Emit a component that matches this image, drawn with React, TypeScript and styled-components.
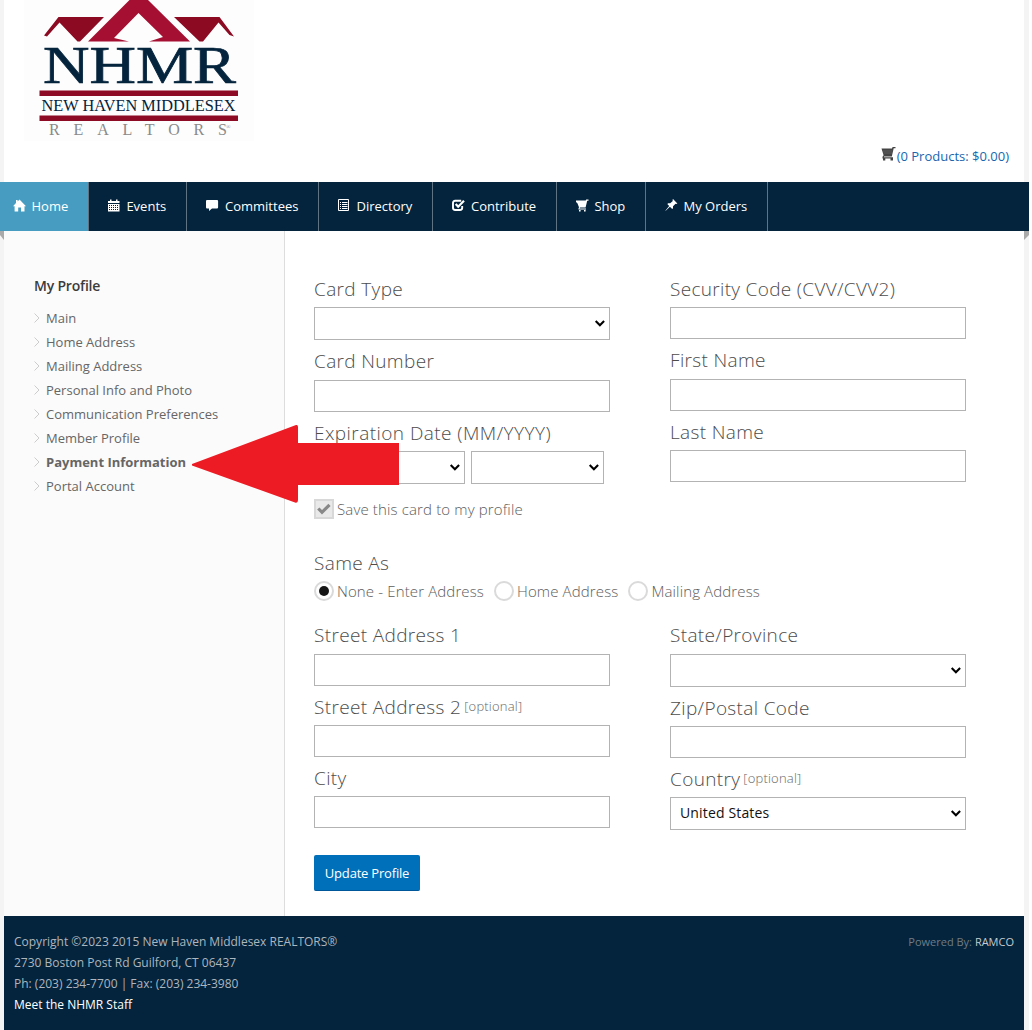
import React from "react";
import styled, { createGlobalStyle, css } from "styled-components";

const NAVY = "#04243d";

const GlobalStyle = createGlobalStyle`
  * { box-sizing: border-box; }
  body {
    margin: 0;
    background: #fff;
    font-family: "Open Sans", "Noto Sans", sans-serif;
    font-size: 13px;
    color: #666;
    overflow: hidden;
  }
  a { color: inherit; text-decoration: none; }
`;

const Backdrop = styled.div`
  position: relative;
  width: 1029px;
  height: 1030px;
  padding-left: 4px;
  background: #f4f4f4;
  overflow: hidden;
`;

const Page = styled.div`
  width: 1020px;
  height: 1030px;
  display: flex;
  flex-direction: column;
  background: #fff;
`;

const Header = styled.header`
  height: 182px;
  flex: none;
  display: flex;
  justify-content: space-between;
  align-items: flex-start;
  padding: 0 15px 0 20px;
`;

const LogoSvg = styled.svg`
  display: block;
  font-family: "Liberation Serif", serif;
`;

const Cart = styled.a`
  display: flex;
  align-items: center;
  margin-top: 146px;
  height: 20px;
  line-height: 20px;
  color: #1467b0;
  svg { margin: -4px 1px 0 0; }
`;

const Nav = styled.nav`
  height: 49px;
  flex: none;
  width: 1029px;
  margin-left: -4px;
  display: flex;
  background: ${NAVY};
`;

const NavItem = styled.a<{ $w: number; $gap: number; $active?: boolean }>`
  width: ${(p) => p.$w}px;
  height: 49px;
  display: flex;
  align-items: center;
  gap: ${(p) => p.$gap}px;
  padding: 0 0 2px ${(p) => (p.$active ? 13 : 19)}px;
  border-right: 1px solid #5f7382;
  background: ${(p) => (p.$active ? "#469dc1" : "transparent")};
  color: #fff;
  white-space: nowrap;
  svg { flex: none; margin-top: -1px; }
`;

const Fold = styled.div<{ $right?: boolean }>`
  position: absolute;
  top: 231px;
  ${(p) => (p.$right ? "left: 1024px;" : "left: 0;")}
  width: ${(p) => (p.$right ? 5 : 4)}px;
  height: 9px;
  background: #aaa;
  clip-path: ${(p) => (p.$right ? "polygon(0 0, 100% 0, 100% 45%, 0 100%)" : "polygon(0 0, 100% 0, 100% 100%, 0 45%)")};
`;

const Body = styled.div`
  height: 685px;
  flex: none;
  display: flex;
`;

const Sidebar = styled.aside`
  width: 281px;
  flex: none;
  padding: 43px 0 0 30px;
  background: #fbfbfb;
  border-right: 1px solid #ddd;
`;

const SideTitle = styled.h2`
  margin: 0 0 8px;
  font-size: 14px;
  font-weight: 600;
  line-height: 24px;
  color: #3c3c3c;
  letter-spacing: -0.2px;
`;

const SideLink = styled.a<{ $current?: boolean }>`
  display: flex;
  align-items: center;
  height: 24px;
  line-height: 24px;
  color: #666;
  font-weight: ${(p) => (p.$current ? 700 : 400)};
  white-space: nowrap;
  svg { margin: -1px 6px 0 0; }
`;

const Form = styled.form`
  flex: 1;
  padding: 48.3px 0 0 29px;
`;

const Columns = styled.div<{ $h: number }>`
  display: flex;
  gap: 60px;
  height: ${(p) => p.$h}px;
`;

const Column = styled.div`
  width: 296px;
`;

const Label = styled.label<{ $track?: number }>`
  display: block;
  height: 28px;
  padding-top: 0.65px;
  font-size: 19px;
  font-weight: 300;
  line-height: 19px;
  letter-spacing: ${(p) => p.$track ?? 0.35}px;
  color: #4c4c4c;
  white-space: nowrap;
  small {
    margin-left: 3px;
    font-size: 13px;
    line-height: 1;
    letter-spacing: 0.2px;
    position: relative;
    top: -3px;
    color: #666;
  }
`;

const box = css`
  border: 1px solid #b3b3b3;
  background: #fff;
`;

const Input = styled.div`
  ${box}
  height: 32px;
  margin-bottom: 11.4px;
`;

const Select = styled.div<{ $w?: number }>`
  ${box}
  width: ${(p) => p.$w ?? 296}px;
  height: 33px;
  margin-bottom: 11.4px;
  padding: 0 4px 0 9px;
  display: flex;
  align-items: center;
  justify-content: space-between;
  font-size: 14px;
  letter-spacing: 0.15px;
  color: #111;
  span { padding-bottom: 2px; }
`;

const DateRow = styled.div`
  display: flex;
  gap: 6px;
`;

const CheckLine = styled.div`
  display: flex;
  align-items: center;
  height: 20px;
  gap: 3px;
  margin-top: 3.3px;
  font-size: 15px;
  font-weight: 300;
  letter-spacing: 0.14px;
  color: #5c5c5c;
`;

const CheckBox = styled.span`
  width: 20px;
  height: 20px;
  display: grid;
  place-items: center;
  border: 2px solid #d8d8d8;
  background: #e9e9e9;
`;

const SameAs = styled.div`
  height: 72.3px;
`;

const RadioRow = styled.div`
  display: flex;
  gap: 10px;
`;

const Radio = styled.span`
  display: flex;
  align-items: center;
  gap: 3px;
  height: 20px;
  font-size: 15px;
  font-weight: 300;
  letter-spacing: 0.13px;
  color: #5c5c5c;
  white-space: nowrap;
`;

const Dot = styled.i<{ $on?: boolean }>`
  width: 20px;
  height: 20px;
  border-radius: 50%;
  border: 2px solid #dadada;
  display: grid;
  place-items: center;
  &::after {
    content: "";
    width: 10px;
    height: 10px;
    border-radius: 50%;
    background: ${(p) => (p.$on ? "#151515" : "transparent")};
  }
`;

const Button = styled.button`
  display: block;
  width: 106px;
  height: 36px;
  padding: 1px 0 0;
  border: 0;
  border-radius: 2px;
  background: #0070bb;
  border-bottom: 1px solid #00589a;
  color: #fff;
  font: 500 13px "Open Sans", sans-serif;
  letter-spacing: -0.2px;
`;

const Footer = styled.footer`
  flex: 1;
  display: flex;
  justify-content: space-between;
  padding: 15px 10px 0;
  background: ${NAVY};
  font-size: 12px;
  line-height: 21px;
  color: #adb6be;
  a { color: #fff; }
`;

const Powered = styled.div`
  font-size: 11px;
  color: #6f7c86;
  a { color: #c6cbce; }
`;

const Arrow = styled.svg`
  position: absolute;
  left: 190px;
  top: 424px;
`;

const Chevron = () => (
  <svg width="11" height="7" viewBox="0 0 11 7" fill="none" stroke="#000" strokeWidth="2.1">
    <path d="M1.700 1 5.900 5.200 10.100 1" />
  </svg>
);

const Icons: Record<string, React.ReactNode> = {
  home: <path d="M6.5.5 13 7.200H11.500V12.5H8V8.5H5.2V12.5H1.600V7.200H0L3 4.1V1H4.6V2.4Z" />,
  calendar: (
    <path
      fillRule="evenodd"
      d="M0 2H2V.5H3.500V2H8V.5H9.500V2H11.500V4H0ZM0 5H11.500V12.500H0ZM1 6V7H2V6ZM3 6V7H4V6ZM5 6V7H6V6ZM7 6V7H8V6ZM9 6V7H10V6ZM1 8V9H2V8ZM3 8V9H4V8ZM5 8V9H6V8ZM7 8V9H8V8ZM9 8V9H10V8ZM1 10V11H2V10ZM3 10V11H4V10ZM5 10V11H6V10ZM7 10V11H8V10ZM9 10V11H10V10Z"
    />
  ),
  comment: <path d="M1 1H11Q12.100 1 12.100 2V8.300Q12.100 9.500 11 9.500H6L3 12V9.500H1Q0 9.500 0 8.300V2Q0 1 1 1Z" />,
  list: (
    <g fill="none" stroke="#fff">
      <path d="M.5.5H10.500V11.500H.5Z" />
      <path d="M2 3.500H3M4 3.500H9.500M2 5.500H3M4 5.500H9.500M2 7.500H3M4 7.500H9.500M2 9.500H3M4 9.500H9.500" />
    </g>
  ),
  check: (
    <g fill="none" stroke="#fff" strokeWidth="1.9">
      <path d="M9.2 1.8H3.2Q1 1.8 1 4V8.8Q1 11 3.2 11H8Q10.2 11 10.2 8.8V7" />
      <path d="M3.7 5 6.2 7.7 12 1.8" strokeWidth="2.200" />
    </g>
  ),
  cart: <path d="M0 1.500H9.700L10.200.5H12.500V1.700H11.200L9.600 8.500H4L3.600 9.400H10V10.500H2.500V9.500L3 8.300 1.400 4.200 0 3ZM3 11H4.600V12.500H3ZM8 11H9.600V12.500H8Z" />,
  pin: <path d="M8 0 12.4 4.4 11.2 4.9 10.5 4.7 8 7.2 8 9.2 7.2 10 4.9 7.7 1 11.5.3 12 .7 11.2 4.2 7 2.3 5 3.2 4.2 5.2 4.3 7.8 1.9 7.5 1Z" />,
};

const NavIcon = ({ name }: { name: string }) => (
  <svg width="13" height="13" viewBox="0 0 13 13" fill="#fff">
    {Icons[name]}
  </svg>
);

const navItems: [string, string, number, number][] = [
  ["home", "Home", 89, 5.5],
  ["calendar", "Events", 98, 5.4],
  ["comment", "Committees", 132, 6],
  ["list", "Directory", 114, 5.5],
  ["check", "Contribute", 124, 6],
  ["cart", "Shop", 89, 5.4],
  ["pin", "My Orders", 122, 5.5],
];

const sideLinks = [
  "Main",
  "Home Address",
  "Mailing Address",
  "Personal Info and Photo",
  "Communication Preferences",
  "Member Profile",
  "Payment Information",
  "Portal Account",
];

const Logo = () => (
  <LogoSvg width="230" height="141" viewBox="24 0 230 141">
    <rect x="24" y="0" width="230" height="141" fill="#fdfdfd" />
    <g fill="#8c0a22">
      <path d="M58.5 17H104L80 41.5H77.5L59.5 22.5 47 36.5 44 35.5Z" />
      <path d="M174 17H219.5L234 36.5 229.5 35 218.5 22.5 203 41.5H199.5Z" />
    </g>
    <path fill="#a50f32" d="M88 41.5 129.5 0H148L190 41.5H149L163 37 138.5 13 114 38 129 41.5Z" />
    <path fill="#8e0b25" d="M39.500 90.500H238V96H39.500ZM39.500 115.500H238V121H39.500Z" />
    <g fill={NAVY}>
      <text x="43" y="83.300" fontSize="52" textLength="193" lengthAdjust="spacingAndGlyphs" stroke={NAVY} strokeWidth=".7">NHMR</text>
      <text x="41.500" y="110.500" fontSize="17.500" textLength="194" lengthAdjust="spacingAndGlyphs">NEW HAVEN MIDDLESEX</text>
    </g>
    <text x="49" y="134.700" fontSize="16" fill="#8a8a8a" textLength="178">REALTORS</text>
    <text x="226" y="129" fontSize="6" fill="#8a8aa0">®</text>
  </LogoSvg>
);

export default function App() {
  return (
    <Backdrop>
      <GlobalStyle />
      <Page>
        <Header>
          <Logo />
          <Cart>
            <svg width="15" height="14" viewBox="0 0 15 14" fill="#444">
              <path d="M.5 1.500H11L11.600 0H14.500V1.300H12.700L10.800 9.500H3V10.300H12V11.500H1.500V9.700L2.600 8.300ZM2 11.500H4.300V13.500H2ZM9.500 11.500H12V13.500H9.500Z" />
              <path d="M2 4H11.500M2.300 6H11" stroke="#777" strokeWidth=".5" />
            </svg>
            (0 Products: $0.00)
          </Cart>
        </Header>
        <Nav>
          {navItems.map(([icon, label, w, gap], i) => (
            <NavItem key={label} $w={w} $gap={gap} $active={i === 0}>
              <NavIcon name={icon} />
              {label}
            </NavItem>
          ))}
        </Nav>
        <Body>
          <Sidebar>
            <SideTitle>My Profile</SideTitle>
            {sideLinks.map((label) => (
              <SideLink key={label} $current={label === "Payment Information"}>
                <svg width="6" height="10" viewBox="0 0 6 10" fill="none" stroke="#ccc">
                  <path d="M.5.5 5 5 .5 9.500" />
                </svg>
                {label}
              </SideLink>
            ))}
          </Sidebar>
          <Form>
            <Columns $h={274}>
              <Column>
                <Label>Card Type</Label>
                <Select><span /><Chevron /></Select>
                <Label>Card Number</Label>
                <Input />
                <Label $track={0.45}>Expiration Date (MM/YYYY)</Label>
                <DateRow>
                  <Select $w={151}><span /><Chevron /></Select>
                  <Select $w={133}><span /><Chevron /></Select>
                </DateRow>
                <CheckLine>
                  <CheckBox>
                    <svg width="14" height="12" viewBox="0 0 14 12" fill="none" stroke="#888" strokeWidth="3.200">
                      <path d="M1.300 5.500 5 9.300 12.500 1.800" />
                    </svg>
                  </CheckBox>
                  Save this card to my profile
                </CheckLine>
              </Column>
              <Column>
                <Label $track={0.32}>Security Code (CVV/CVV2)</Label>
                <Input />
                <Label>First Name</Label>
                <Input />
                <Label>Last Name</Label>
                <Input />
              </Column>
            </Columns>
            <SameAs>
              <Label>Same As</Label>
              <RadioRow>
                <Radio><Dot $on />None - Enter Address</Radio>
                <Radio><Dot />Home Address</Radio>
                <Radio><Dot />Mailing Address</Radio>
              </RadioRow>
            </SameAs>
            <Columns $h={229.4}>
              <Column>
                <Label>Street Address 1</Label>
                <Input />
                <Label>Street Address 2<small>[optional]</small></Label>
                <Input />
                <Label>City</Label>
                <Input />
              </Column>
              <Column>
                <Label>State/Province</Label>
                <Select><span /><Chevron /></Select>
                <Label>Zip/Postal Code</Label>
                <Input />
                <Label>Country<small>[optional]</small></Label>
                <Select><span>United States</span><Chevron /></Select>
              </Column>
            </Columns>
            <Button type="button">Update Profile</Button>
          </Form>
        </Body>
        <Footer>
          <div>
            Copyright ©2023 2015 New Haven Middlesex REALTORS®<br />
            2730 Boston Post Rd Guilford, CT 06437<br />
            Ph: (203) 234-7700 | Fax: (203) 234-3980<br />
            <a>Meet the NHMR Staff</a>
          </div>
          <Powered>Powered By: <a>RAMCO</a></Powered>
        </Footer>
      </Page>
      <Fold />
      <Fold $right />
      <Arrow width="210" height="80" viewBox="190 424 210 80" fill="#ed1c24">
        <path d="M192 464 296 425Q298 424.500 298 427V443H399V485H298V500Q298 503.500 295 502.500L192 465.500Z" />
      </Arrow>
    </Backdrop>
  );
}
